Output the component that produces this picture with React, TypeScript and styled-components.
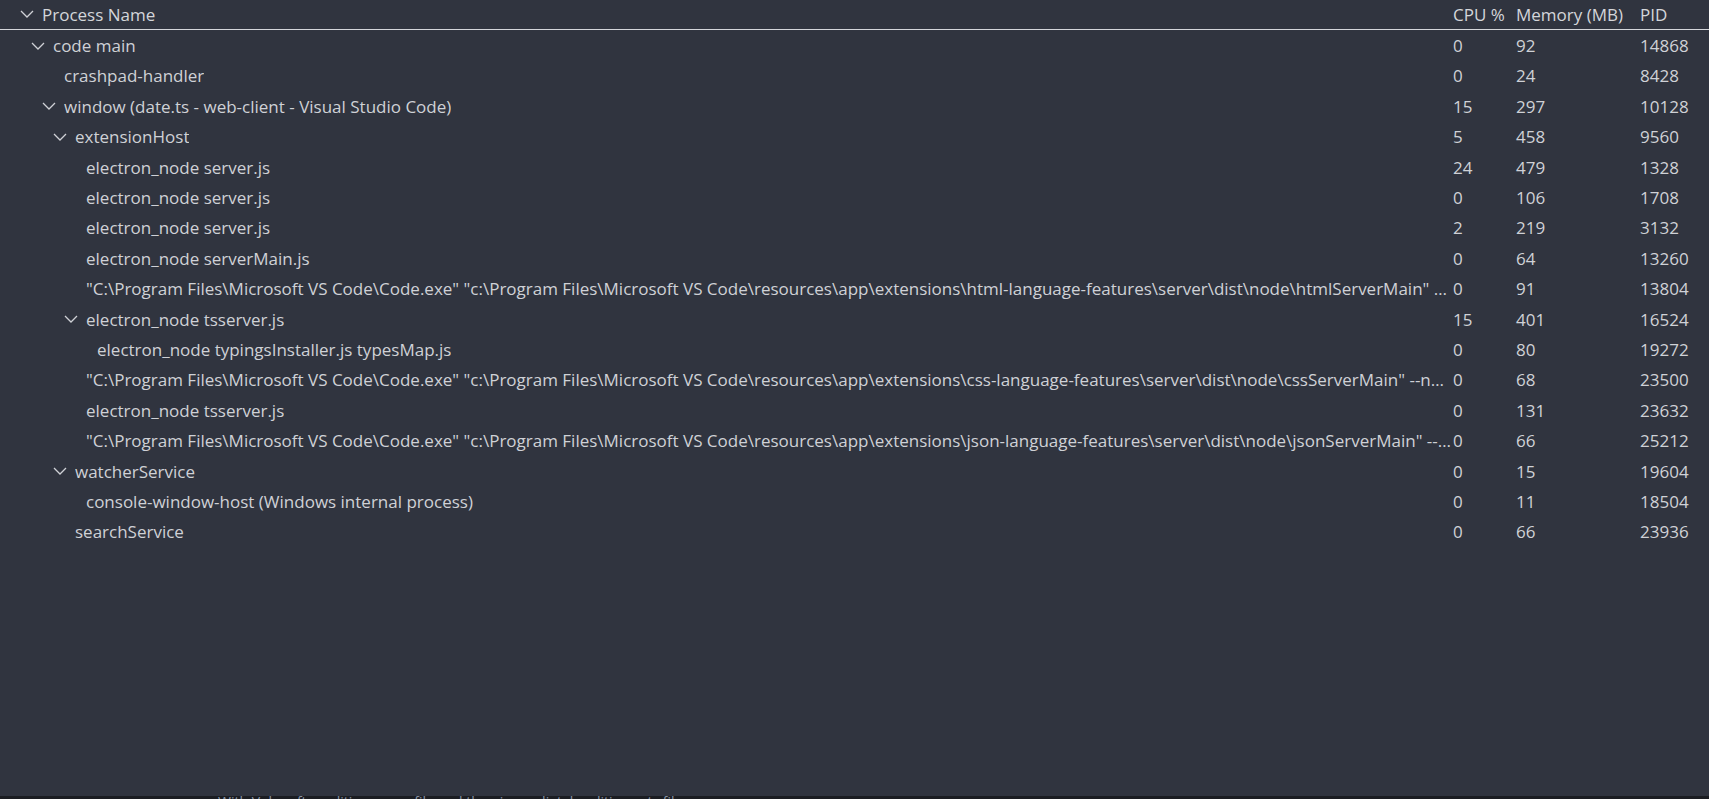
import React from "react";
import styled, { createGlobalStyle } from "styled-components";

const Global = createGlobalStyle`
  html, body { margin: 0; padding: 0; background: #30343f; }
  body { font-family: "Open Sans", "Noto Sans", sans-serif; }
  #root { height: 799px; }
`;

type Proc = { name: string; level: number; open?: boolean; cpu: string; mem: string; pid: string };

const rows: Proc[] = [
  { name: "code main", level: 1, open: true, cpu: "0", mem: "92", pid: "14868" },
  { name: "crashpad-handler", level: 2, cpu: "0", mem: "24", pid: "8428" },
  { name: "window (date.ts - web-client - Visual Studio Code)", level: 2, open: true, cpu: "15", mem: "297", pid: "10128" },
  { name: "extensionHost", level: 3, open: true, cpu: "5", mem: "458", pid: "9560" },
  { name: "electron_node server.js", level: 4, cpu: "24", mem: "479", pid: "1328" },
  { name: "electron_node server.js", level: 4, cpu: "0", mem: "106", pid: "1708" },
  { name: "electron_node server.js", level: 4, cpu: "2", mem: "219", pid: "3132" },
  { name: "electron_node serverMain.js", level: 4, cpu: "0", mem: "64", pid: "13260" },
  {
    name: "\"C:\\Program Files\\Microsoft VS Code\\Code.exe\" \"c:\\Program Files\\Microsoft VS Code\\resources\\app\\extensions\\html-language-features\\server\\dist\\node\\htmlServerMain\" --node-ipc --clientProcessId=10128",
    level: 4, cpu: "0", mem: "91", pid: "13804",
  },
  { name: "electron_node tsserver.js", level: 4, open: true, cpu: "15", mem: "401", pid: "16524" },
  { name: "electron_node typingsInstaller.js typesMap.js", level: 5, cpu: "0", mem: "80", pid: "19272" },
  {
    name: "\"C:\\Program Files\\Microsoft VS Code\\Code.exe\" \"c:\\Program Files\\Microsoft VS Code\\resources\\app\\extensions\\css-language-features\\server\\dist\\node\\cssServerMain\" --node-ipc --clientProcessId=10128",
    level: 4, cpu: "0", mem: "68", pid: "23500",
  },
  { name: "electron_node tsserver.js", level: 4, cpu: "0", mem: "131", pid: "23632" },
  {
    name: "\"C:\\Program Files\\Microsoft VS Code\\Code.exe\" \"c:\\Program Files\\Microsoft VS Code\\resources\\app\\extensions\\json-language-features\\server\\dist\\node\\jsonServerMain\" --node-ipc --clientProcessId=10128",
    level: 4, cpu: "0", mem: "66", pid: "25212",
  },
  { name: "watcherService", level: 3, open: true, cpu: "0", mem: "15", pid: "19604" },
  { name: "console-window-host (Windows internal process)", level: 4, cpu: "0", mem: "11", pid: "18504" },
  { name: "searchService", level: 3, cpu: "0", mem: "66", pid: "23936" },
];

const Page = styled.div`
  height: 799px;
  display: flex;
  flex-direction: column;
  background: #30343f;
  color: #cfd1d6;
  font-size: 17px;
  overflow: hidden;
`;

const Table = styled.div`
  flex: 1;
  display: grid;
  grid-template-columns: 1fr 63px 124px 70px;
  grid-auto-rows: 30.4px;
  align-content: start;
`;

const HeaderCell = styled.div<{ $first?: boolean }>`
  display: flex;
  align-items: center;
  border-bottom: 1px solid #d4d6da;
  padding-left: ${(p) => (p.$first ? "20px" : "1px")};
  white-space: nowrap;
  color: #d4d6da;
  padding-bottom: 1px;
`;

const NameCell = styled.div<{ $level: number }>`
  display: flex;
  align-items: center;
  padding-left: ${(p) => 20 + 11 * p.$level}px;
  min-width: 0;
  white-space: nowrap;
`;

const Twistie = styled.span`
  flex: 0 0 22px;
  display: flex;
  align-items: center;
  height: 100%;
`;

const NameText = styled.span`
  overflow: hidden;
  text-overflow: ellipsis;
  min-width: 0;
`;

const DataCell = styled.div`
  display: flex;
  align-items: center;
  padding-left: 1px;
  white-space: nowrap;
`;

const BottomStrip = styled.div`
  flex: 0 0 3px;
  background: #1b1d22;
  overflow: hidden;
  position: relative;
  padding-left: 218px;
  font-size: 14px;
  color: #8a94a6;
  line-height: 14px;
`;

const StripText = styled.div`
  margin-top: -1px;
  white-space: nowrap;
`;

const Chevron = () => (
  <svg width="14" height="8" viewBox="0 0 14 8" fill="none">
    <polyline points="1,1 7,7 13,1" stroke="#cfd1d6" strokeWidth="1.3" strokeLinejoin="miter" />
  </svg>
);

export default function App() {
  return (
    <>
      <Global />
      <Page>
        <Table>
          <HeaderCell $first>
            <Twistie>
              <Chevron />
            </Twistie>
            <span>Process Name</span>
          </HeaderCell>
          <HeaderCell>CPU %</HeaderCell>
          <HeaderCell>Memory (MB)</HeaderCell>
          <HeaderCell>PID</HeaderCell>
          {rows.map((r, i) => (
            <React.Fragment key={i}>
              <NameCell $level={r.level}>
                <Twistie>{r.open ? <Chevron /> : null}</Twistie>
                <NameText>{r.name}</NameText>
              </NameCell>
              <DataCell>{r.cpu}</DataCell>
              <DataCell>{r.mem}</DataCell>
              <DataCell>{r.pid}</DataCell>
            </React.Fragment>
          ))}
        </Table>
        <BottomStrip>
          <StripText>With Volar after editing a .vue file and then immediately editing a .ts file</StripText>
        </BottomStrip>
      </Page>
    </>
  );
}
